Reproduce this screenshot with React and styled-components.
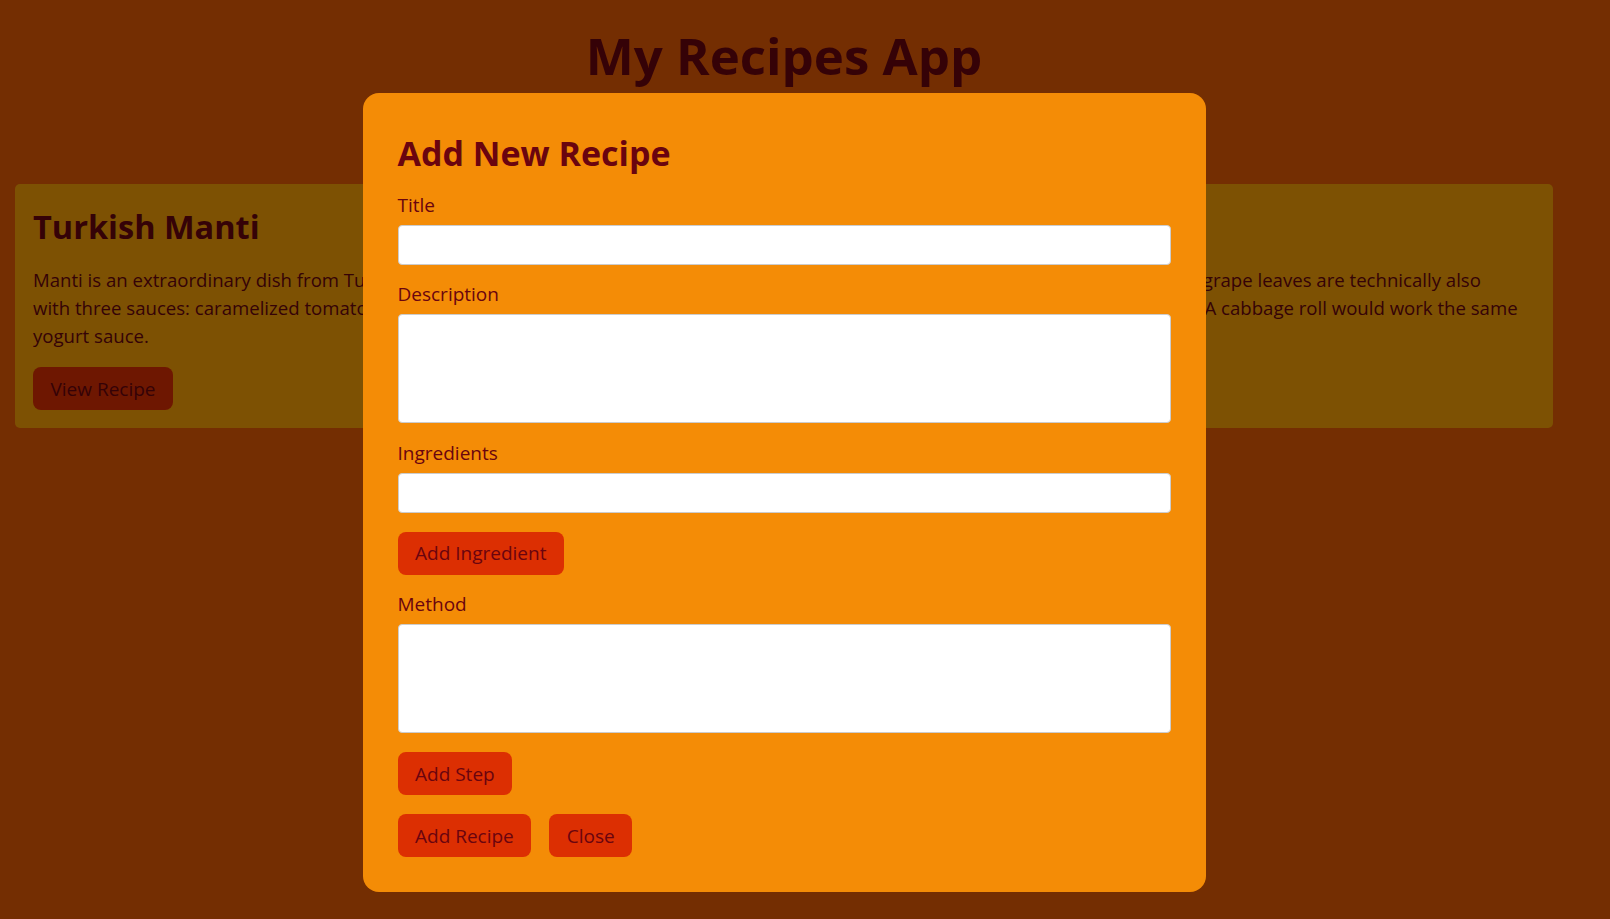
import React, { useState } from "react";
import styled, { createGlobalStyle } from "styled-components";

// line breaks in the descriptions are kept (white-space: pre-line)
const recipes = [
  {
    id: 1,
    title: "Turkish Manti",
    description:
      "Manti is an extraordinary dish from Turkey. Tiny lamb dumplings are served\nwith three sauces: caramelized tomato paste, paprika butter and a garlic\nyogurt sauce.",
  },
  {
    id: 2,
    title: "Sarma",
    description:
      "Sarma means wrapped in Turkish, so stuffed grape leaves are technically also\nsarma, though most people call them dolma. A cabbage roll would work the same\nway.",
  },
];

const App = () => {
  const [showModal, setShowModal] = useState(true);

  return (
    <>
      <GlobalStyle />
      <Page>
        <AppTitle>My Recipes App</AppTitle>
        <TopBar>
          <Button onClick={() => setShowModal(true)}>Add New Recipe</Button>
        </TopBar>
        <RecipeGrid>
          {recipes.map((recipe) => (
            <RecipeCard key={recipe.id}>
              <CardTitle>{recipe.title}</CardTitle>
              <CardText>{recipe.description}</CardText>
              <Button>View Recipe</Button>
            </RecipeCard>
          ))}
        </RecipeGrid>
      </Page>

      {showModal && (
        <ModalOverlay>
          <ModalContent>
            <ModalTitle>Add New Recipe</ModalTitle>
            <Field>
              <Label htmlFor="title">Title</Label>
              <TextInput id="title" type="text" />
            </Field>
            <Field>
              <Label htmlFor="description">Description</Label>
              <TextArea id="description" />
            </Field>
            <Field>
              <Label htmlFor="ingredients">Ingredients</Label>
              <TextInput id="ingredients" type="text" />
            </Field>
            <Row>
              <Button>Add Ingredient</Button>
            </Row>
            <Field>
              <Label htmlFor="method">Method</Label>
              <TextArea id="method" />
            </Field>
            <Row>
              <Button>Add Step</Button>
            </Row>
            <Row>
              <Button>Add Recipe</Button>
              <Button onClick={() => setShowModal(false)}>Close</Button>
            </Row>
          </ModalContent>
        </ModalOverlay>
      )}
    </>
  );
};

export default App;

// Styled Components
const GlobalStyle = createGlobalStyle`
  html, body {
    margin: 0;
    padding: 0;
  }

  body {
    background: #e85d04;
    color: #6a040f;
    font-family: "Open Sans", "Noto Sans", sans-serif;
    min-height: 100vh;
  }
`;

const Page = styled.div`
  width: 1568px;
  padding: 0 15px;
  box-sizing: border-box;
`;

const AppTitle = styled.h1`
  margin: 23px 0 0;
  font-size: 51px;
  line-height: 64px;
  font-weight: 700;
  text-align: center;
  color: #6a040f;
`;

const TopBar = styled.div`
  display: flex;
  justify-content: center;
  margin-top: 10px;
`;

const RecipeGrid = styled.div`
  display: grid;
  grid-template-columns: 1fr 1fr;
  gap: 20px;
  margin-top: 44px;
`;

const RecipeCard = styled.div`
  background: #faa307;
  border-radius: 5px;
  padding: 18px;
`;

const CardTitle = styled.h2`
  margin: 3px 0 0;
  font-size: 32.5px;
  line-height: 44px;
  font-weight: 700;
  color: #6a040f;
`;

const CardText = styled.p`
  margin: 17px 0 17px;
  font-size: 18.6px;
  line-height: 28px;
  white-space: pre-line;
  color: #6a040f;
`;

const Button = styled.button`
  height: 43px;
  padding: 0 17.5px;
  background: #dc2f02;
  color: #6a040f;
  border: none;
  border-radius: 8px;
  font-family: inherit;
  font-size: 19px;
  cursor: pointer;

  &:hover {
    background: #d00000;
  }
`;

const ModalOverlay = styled.div`
  position: fixed;
  inset: 0;
  background: rgba(0, 0, 0, 0.5);
  display: flex;
  justify-content: center;
  align-items: flex-start;
  padding: 93px 42px 0 0;
  z-index: 100;
`;

const ModalContent = styled.div`
  width: 843px;
  box-sizing: border-box;
  padding: 35px;
  background: #f48c06;
  border-radius: 16px;
  display: flex;
  flex-direction: column;
  gap: 16.5px;
`;

const ModalTitle = styled.h2`
  margin: 5px 0 1px;
  font-size: 34px;
  line-height: 41px;
  font-weight: 700;
  color: #6a040f;
`;

const Field = styled.div`
  display: flex;
  flex-direction: column;
  gap: 7px;
`;

const Label = styled.label`
  font-size: 19px;
  line-height: 26px;
  color: #6a040f;
`;

const TextInput = styled.input`
  display: block;
  width: 100%;
  height: 40px;
  box-sizing: border-box;
  padding: 8px 10px;
  border: 1px solid #ccc;
  border-radius: 4px;
  background: #fff;
  font-family: inherit;
  font-size: 17px;
`;

const TextArea = styled.textarea`
  display: block;
  width: 100%;
  height: 109px;
  box-sizing: border-box;
  padding: 8px 10px;
  border: 1px solid #ccc;
  border-radius: 4px;
  background: #fff;
  font-family: inherit;
  font-size: 17px;
  resize: none;
`;

const Row = styled.div`
  display: flex;
  gap: 18px;
  margin-top: 2.5px;
`;
